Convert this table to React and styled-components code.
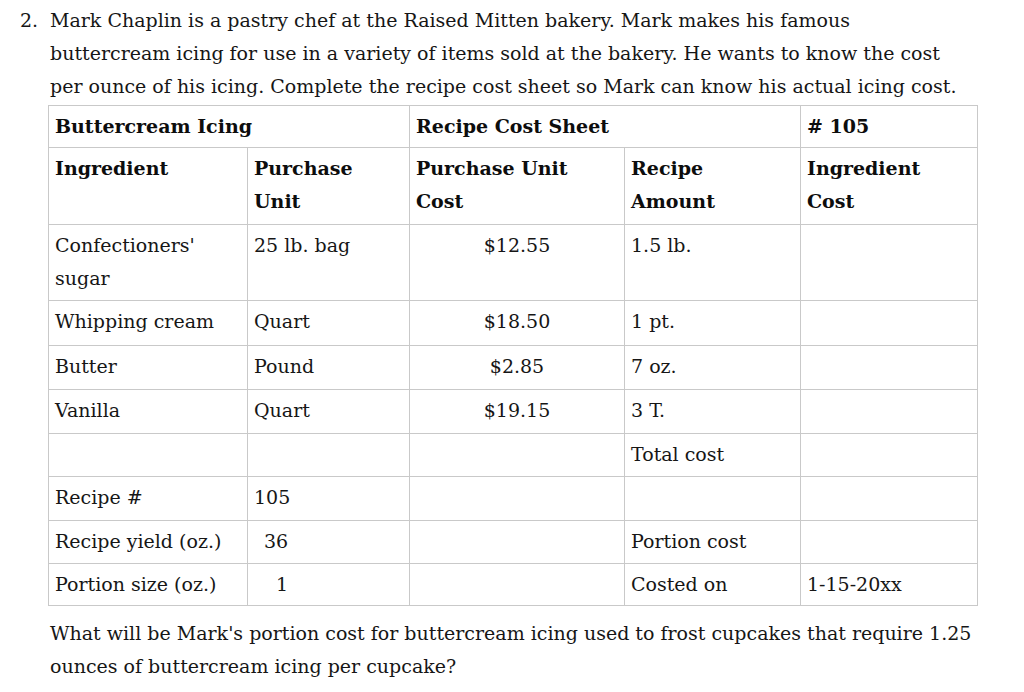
import React from "react";
import styled, { createGlobalStyle } from "styled-components";

const Global = createGlobalStyle`
  html, body { margin: 0; padding: 0; background: #ffffff; }
  body {
    font-family: "DejaVu Serif", "Liberation Serif", serif;
    color: #161616;
  }
`;

const Page = styled.div`
  width: 1024px;
  height: 692px;
  box-sizing: border-box;
  padding: 4px 0 0 20px;
  font-size: 19px;
  line-height: 33px;
  overflow: hidden;
`;

const Item = styled.div`
  display: flex;
  align-items: flex-start;
`;

const Marker = styled.div`
  width: 30px;
  flex: none;
`;

const Body = styled.div`
  flex: 1;
  min-width: 0;
`;

const Line = styled.div`
  white-space: nowrap;
`;

const Sheet = styled.table`
  border-collapse: collapse;
  table-layout: fixed;
  width: 929px;
  margin: 2px 0 0 -2px;
  font-size: 19px;
  line-height: 33px;
`;

const Row = styled.tr`
  height: ${(p) => p.$h}px;
`;

const Cell = styled.td`
  border: 1px solid #c9c9c9;
  padding: 4px 6px 4px ${(p) => 6 + (p.$indent || 0)}px;
  vertical-align: top;
  text-align: ${(p) => p.$align || "left"};
  font-weight: ${(p) => (p.$bold ? 700 : 400)};
  color: ${(p) => (p.$bold ? "#0d0d0d" : "#161616")};
  white-space: nowrap;
`;

const Question = styled.div`
  margin-top: 11px;
`;

const rows = [
  ["Confectioners'\nsugar", "25 lb. bag", "$12.55", "1.5 lb.", "", 76],
  ["Whipping cream", "Quart", "$18.50", "1 pt.", "", 45],
  ["Butter", "Pound", "$2.85", "7 oz.", "", 44],
  ["Vanilla", "Quart", "$19.15", "3 T.", "", 44],
  ["", "", "", "Total cost", "", 43],
];

const footer = [
  ["Recipe #", "105", 0, "", "", 44],
  ["Recipe yield (oz.)", "36", 10, "Portion cost", "", 43],
  ["Portion size (oz.)", "1", 22, "Costed on", "1-15-20xx", 42],
];

const Multi = ({ text }) =>
  text.split("\n").map((t, i) => <div key={i}>{t || "\u00a0"}</div>);

export default function App() {
  return (
    <Page>
      <Global />
      <Item>
        <Marker>2.</Marker>
        <Body>
          <Line>Mark Chaplin is a pastry chef at the Raised Mitten bakery. Mark makes his famous</Line>
          <Line>buttercream icing for use in a variety of items sold at the bakery. He wants to know the cost</Line>
          <Line>per ounce of his icing. Complete the recipe cost sheet so Mark can know his actual icing cost.</Line>
          <Sheet>
            <colgroup>
              <col style={{ width: 199 }} />
              <col style={{ width: 162 }} />
              <col style={{ width: 215 }} />
              <col style={{ width: 176 }} />
              <col style={{ width: 177 }} />
            </colgroup>
            <tbody>
              <Row $h={42}>
                <Cell $bold colSpan={2}>Buttercream Icing</Cell>
                <Cell $bold colSpan={2}>Recipe Cost Sheet</Cell>
                <Cell $bold># 105</Cell>
              </Row>
              <Row $h={77}>
                <Cell $bold>Ingredient</Cell>
                <Cell $bold><Multi text={"Purchase\nUnit"} /></Cell>
                <Cell $bold><Multi text={"Purchase Unit\nCost"} /></Cell>
                <Cell $bold><Multi text={"Recipe\nAmount"} /></Cell>
                <Cell $bold><Multi text={"Ingredient\nCost"} /></Cell>
              </Row>
              {rows.map((r, i) => (
                <Row key={i} $h={r[5]}>
                  <Cell><Multi text={r[0]} /></Cell>
                  <Cell>{r[1] || "\u00a0"}</Cell>
                  <Cell $align="center">{r[2] || "\u00a0"}</Cell>
                  <Cell>{r[3] || "\u00a0"}</Cell>
                  <Cell>{r[4] || "\u00a0"}</Cell>
                </Row>
              ))}
              {footer.map((r, i) => (
                <Row key={i} $h={r[5]}>
                  <Cell>{r[0]}</Cell>
                  <Cell $indent={r[2]}>{r[1]}</Cell>
                  <Cell>{"\u00a0"}</Cell>
                  <Cell>{r[3] || "\u00a0"}</Cell>
                  <Cell>{r[4] || "\u00a0"}</Cell>
                </Row>
              ))}
            </tbody>
          </Sheet>
          <Question>
            <Line>What will be Mark's portion cost for buttercream icing used to frost cupcakes that require 1.25</Line>
            <Line>ounces of buttercream icing per cupcake?</Line>
          </Question>
        </Body>
      </Item>
    </Page>
  );
}
